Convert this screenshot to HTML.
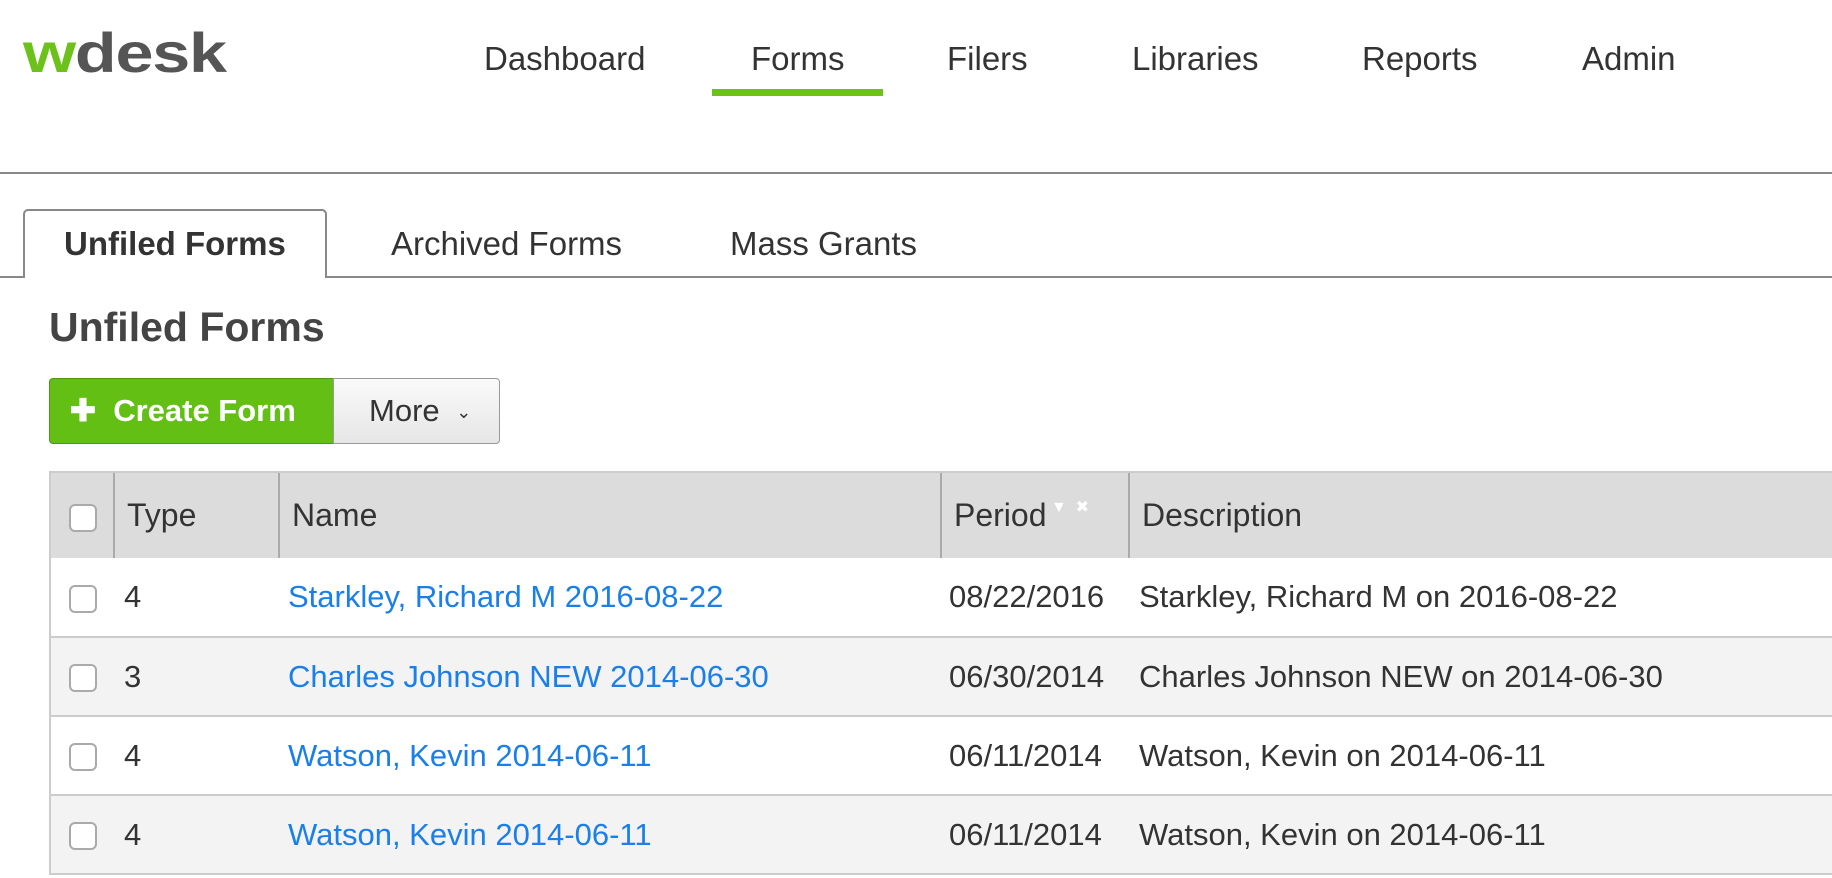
<!DOCTYPE html>
<html><head><meta charset="utf-8"><style>
*{margin:0;padding:0;box-sizing:border-box}
body{width:1832px;height:878px;overflow:hidden;background:#fff;font-family:"Liberation Sans",Arial,sans-serif;color:#333;position:relative}
.abs{position:absolute}
.logo{left:23px;top:21px;font-size:56px;line-height:64px;font-weight:bold;letter-spacing:-1px;color:#555;transform:scaleX(1.22);transform-origin:left top}
.logo .w{color:#6cc11a}
.nav{top:40px;font-size:33px;color:#333}
.uline{left:712px;top:89px;width:171px;height:7px;background:#6cc11a}
.hline{left:0;top:172px;width:1832px;height:2px;background:#888}
.tabline{left:0;top:276px;width:1832px;height:2px;background:#888}
.tab{left:23px;top:209px;width:304px;height:69px;border:2px solid #888;border-bottom:none;border-radius:5px 5px 0 0;background:#fff}
.tabt{top:225px;font-size:33px}
h1{position:absolute;left:49px;top:304px;font-size:41px;font-weight:bold;color:#444}
.btn1{left:49px;top:378px;width:285px;height:66px;background:#63bf13;border:1px solid #4a9a0c;border-radius:4px 0 0 4px;color:#fff;font-size:31px;font-weight:bold;line-height:64px;padding-left:20px}
.btn2{left:333px;top:378px;width:167px;height:66px;background:linear-gradient(#fafafa,#e6e6e6);border:1px solid #999;border-radius:0 4px 4px 0;font-size:31px;line-height:64px;padding-left:35px;color:#333}
table{position:absolute;left:49px;top:471px;width:1790px;border-collapse:collapse;font-size:31px}
td,th{text-align:left;font-weight:normal;white-space:nowrap}
th{background:#dcdcdc;height:86px;border-left:2px solid #aaa;border-top:2px solid #ccc;font-size:32px}
tr.r td{height:79px;border-bottom:2px solid #ccc}
tr.alt td{background:#f3f3f3}
.cb{display:inline-block;width:28px;height:28px;border:2px solid #aaa;border-radius:6px;background:#fff;vertical-align:middle}
a{color:#1a7fe8;text-decoration:none}
</style></head><body>
<div class="abs logo"><span class="w">w</span>desk</div>
<div class="abs nav" style="left:484px">Dashboard</div>
<div class="abs nav" style="left:751px">Forms</div>
<div class="abs nav" style="left:947px">Filers</div>
<div class="abs nav" style="left:1132px">Libraries</div>
<div class="abs nav" style="left:1362px">Reports</div>
<div class="abs nav" style="left:1582px">Admin</div>
<div class="abs uline"></div>
<div class="abs hline"></div>
<div class="abs tabline"></div>
<div class="abs tab"></div>
<div class="abs tabt" style="left:64px;font-weight:bold">Unfiled Forms</div>
<div class="abs tabt" style="left:391px">Archived Forms</div>
<div class="abs tabt" style="left:730px">Mass Grants</div>
<h1>Unfiled Forms</h1>
<div class="abs btn1">✚&nbsp; Create Form</div>
<div class="abs btn2">More <span style="font-size:18px;position:relative;top:-3px;left:8px">&#8964;</span></div>
<table>
<tr><th style="width:64px;border-left:2px solid #ccc;padding-left:18px"><span class="cb"></span></th><th style="width:165px;padding-left:12px">Type</th><th style="width:662px;padding-left:12px">Name</th><th style="width:188px;padding-left:12px">Period<span style="color:#fff;font-size:16px;vertical-align:top"> ▼ &nbsp;✖</span></th><th style="padding-left:12px">Description</th></tr>
<tr class="r"><td style="padding-left:18px;border-left:2px solid #ccc"><span class="cb"></span></td><td style="padding-left:10px">4</td><td style="padding-left:9px"><a>Starkley, Richard M 2016-08-22</a></td><td style="padding-left:8px">08/22/2016</td><td style="padding-left:10px">Starkley, Richard M on 2016-08-22</td></tr>
<tr class="r alt"><td style="padding-left:18px;border-left:2px solid #ccc"><span class="cb"></span></td><td style="padding-left:10px">3</td><td style="padding-left:9px"><a>Charles Johnson NEW 2014-06-30</a></td><td style="padding-left:8px">06/30/2014</td><td style="padding-left:10px">Charles Johnson NEW on 2014-06-30</td></tr>
<tr class="r"><td style="padding-left:18px;border-left:2px solid #ccc"><span class="cb"></span></td><td style="padding-left:10px">4</td><td style="padding-left:9px"><a>Watson, Kevin 2014-06-11</a></td><td style="padding-left:8px">06/11/2014</td><td style="padding-left:10px">Watson, Kevin on 2014-06-11</td></tr>
<tr class="r alt"><td style="padding-left:18px;border-left:2px solid #ccc"><span class="cb"></span></td><td style="padding-left:10px">4</td><td style="padding-left:9px"><a>Watson, Kevin 2014-06-11</a></td><td style="padding-left:8px">06/11/2014</td><td style="padding-left:10px">Watson, Kevin on 2014-06-11</td></tr>
</table>
</body></html>
